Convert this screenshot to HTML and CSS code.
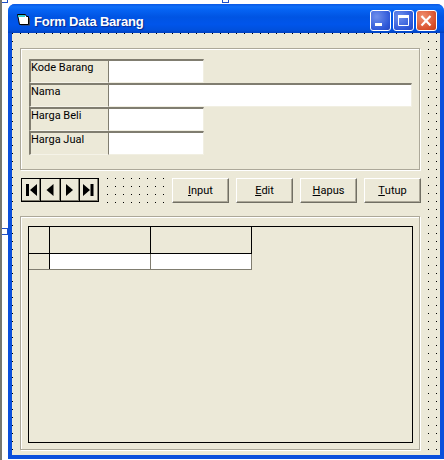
FILE: index.html
```html
<!DOCTYPE html>
<html lang="en">
<head>
    <meta charset="UTF-8">
    <title>Form Data Barang</title>
    <link rel="stylesheet" href="styles.css">
</head>
<body>
    <span class="handle handle-corner"></span>
    <span class="handle handle-top"></span>
    <span class="handle handle-left"></span>

    <div class="window">
        <div class="titlebar">
            <svg class="app-icon" width="16" height="16" viewBox="0 0 16 16">
                <path d="M1.500 2.500h8l1 2h2v8h-9z" fill="#fff" stroke="#000"/>
                <path d="M2 3h7v2H2z" fill="#3cc"/>
                <path d="M13 6h1v7.500H5v-.500h8z" fill="#445"/>
            </svg>
            <span class="title">Form Data Barang</span>
            <div class="caption-buttons">
                <div class="caption-btn">
                    <svg width="19" height="19" viewBox="0 0 19 19"><path d="M4 12h7v3H4z" fill="#fff"/></svg>
                </div>
                <div class="caption-btn">
                    <svg width="19" height="19" viewBox="0 0 19 19"><path d="M4.500 4.500h10v10h-10z" fill="none" stroke="#fff"/><path d="M4 4h11v3H4z" fill="#fff"/></svg>
                </div>
                <div class="caption-btn caption-close">
                    <svg width="19" height="19" viewBox="0 0 19 19"><path d="M4.500 5l9 9.500M13.500 5l-9 9.500" stroke="#fff" stroke-width="2.200"/></svg>
                </div>
            </div>
        </div>

        <div class="client">
            <div class="panel">
                <div class="group fields">
                    <div class="field">
                        <div class="field-label">Kode Barang</div>
                        <div class="field-input"></div>
                    </div>
                    <div class="field">
                        <div class="field-label">Nama</div>
                        <div class="field-input field-input-wide"></div>
                    </div>
                    <div class="field">
                        <div class="field-label">Harga Beli</div>
                        <div class="field-input"></div>
                    </div>
                    <div class="field">
                        <div class="field-label">Harga Jual</div>
                        <div class="field-input"></div>
                    </div>
                </div>

                <div class="toolbar">
                    <div class="nav">
                        <div class="nav-btn">
                            <svg width="14" height="14" viewBox="0 0 14 14"><path d="M2 1h3v12H2zM13 1v12L6 7z"/></svg>
                        </div>
                        <div class="nav-btn">
                            <svg width="14" height="14" viewBox="0 0 14 14"><path d="M10.500 1v12L3.500 7z"/></svg>
                        </div>
                        <div class="nav-btn">
                            <svg width="14" height="14" viewBox="0 0 14 14"><path d="M4 1v12l7-6z"/></svg>
                        </div>
                        <div class="nav-btn">
                            <svg width="14" height="14" viewBox="0 0 14 14"><path d="M2 1v12l7-6zM9.500 1h3v12h-3z"/></svg>
                        </div>
                    </div>
                    <div class="dots"></div>
                    <div class="buttons">
                        <div class="btn"><u>I</u>nput</div>
                        <div class="btn"><u>E</u>dit</div>
                        <div class="btn"><u>H</u>apus</div>
                        <div class="btn"><u>T</u>utup</div>
                    </div>
                </div>

                <div class="group grid-group">
                    <div class="grid">
                        <div class="grid-head">
                            <div class="cell cell-fixed"></div>
                            <div class="cell cell-col"></div>
                            <div class="cell cell-col"></div>
                        </div>
                        <div class="grid-row">
                            <div class="cell cell-fixed"></div>
                            <div class="cell cell-col cell-data"></div>
                            <div class="cell cell-col cell-data"></div>
                        </div>
                    </div>
                </div>
            </div>
        </div>
    </div>
</body>
</html>
```

FILE: styles.css
```css
* {
    margin: 0;
    padding: 0;
    box-sizing: border-box;
}

body {
    width: 444px;
    height: 460px;
    overflow: hidden;
    background: white;
    font-family: Roboto, 'Liberation Sans', sans-serif;
    font-size: 11px;
    color: #000;
    position: relative;
    padding: 4px 0 1px 6px;
    border-left: 2px solid #77776f;
}

/* designer sizing handles */
.handle {
    position: absolute;
    width: 7px;
    height: 7px;
    background: white;
    border: 1px solid #1f50c8;
}

.handle-corner {
    left: -1px;
    top: -4px;
}

.handle-top {
    left: 220px;
    top: -4px;
}

.handle-left {
    left: -1px;
    top: 228px;
}

.window {
    width: 436px;
    height: 455px;
    background: #0a4fdc;
    border-radius: 7px 7px 0 0;
    display: flex;
    flex-direction: column;
    overflow: hidden;
}

.titlebar {
    height: 29px;
    flex: none;
    display: flex;
    align-items: center;
    padding: 0 7px 0 8px;
    background: linear-gradient(#0a58e4 0, #1070f8 10%, #0562f2 22%, #0054e3 45%, #0055eb 70%, #0050dc 90%, #0040c0 100%);
}

.app-icon {
    flex: none;
    margin-top: 3px;
}

.title {
    margin-left: 2px;
    margin-top: 6px;
    color: white;
    font-family: 'Liberation Sans', Arial, sans-serif;
    font-size: 13px;
    font-weight: bold;
    letter-spacing: -0.2px;
    text-shadow: 1px 1px 1px #0a2a90;
}

.caption-buttons {
    margin-left: auto;
    margin-top: 4px;
    display: flex;
    gap: 2px;
}

.caption-btn {
    width: 21px;
    height: 21px;
    border: 1px solid white;
    border-radius: 3px;
    background: radial-gradient(circle at 30% 30%, #6f90ec, #2f58d8 70%, #2848c0);
}

.caption-btn svg {
    display: block;
}

.caption-close {
    background: radial-gradient(circle at 30% 30%, #f09070, #d8502c 70%, #c03c18);
}

.client {
    flex: 1;
    margin: 0 4px 5px 4px;
    background-color: #ece9d8;
    background-image: radial-gradient(circle at 0.500px 0.500px, #000 0.700px, transparent 0.800px);
    background-size: 8px 8px;
}

.panel {
    width: 409px;
    height: 421px;
    margin-top: 1px;
    margin-left: 1px;
    background: #ece9d8;
    padding: 14px 0 0 7px;
}

.group {
    width: 400px;
    border: 1px solid #aca899;
    box-shadow: inset 1px 1px 0 white, 1px 1px 0 white;
}

.fields {
    height: 122px;
    padding: 10px 0 0 8px;
}

.field {
    display: flex;
    height: 24px;
}

.field-label {
    width: 80px;
    height: 24px;
    border: 1px solid #807d70;
    border-top-width: 2px;
    border-left-width: 2px;
    border-bottom-color: #f5f3e8;
    line-height: 13px;
    font-size: 11px;
}

.field-input {
    width: 95px;
    height: 24px;
    background: white;
    border-top: 2px solid #807d70;
    border-right: 1px solid #f1efe2;
    border-bottom: 1px solid #f1efe2;
}

.field-input-wide {
    width: 303px;
}

.toolbar {
    height: 46px;
    padding-top: 8px;
    display: flex;
    align-items: flex-start;
    margin-left: 1px;
}

.nav {
    width: 78px;
    height: 24px;
    flex: none;
    display: flex;
    border: 1px solid #000;
    background: #000;
    gap: 1px;
}

.nav-btn {
    flex: 1;
    background: #ece9d8;
    border-right: 1px solid #807d70;
    border-bottom: 1px solid #807d70;
    display: flex;
    align-items: center;
    justify-content: center;
}

.dots {
    width: 60px;
    height: 26px;
    flex: none;
    margin-left: 8px;
    background-image: radial-gradient(circle at 0.500px 0.500px, #000 0.700px, transparent 0.800px);
    background-size: 8px 8px;
}

.buttons {
    margin-left: 5px;
    display: flex;
    gap: 7px;
}

.btn {
    width: 57px;
    height: 25px;
    background: #ece9d8;
    border: 1px solid;
    border-color: #fff #716f64 #716f64 #fff;
    box-shadow: inset -1px -1px 0 #aca899;
    display: flex;
    align-items: center;
    justify-content: center;
    font-size: 11px;
}

.grid-group {
    height: 234px;
    padding: 9px 0 0 7px;
}

.grid {
    width: 385px;
    height: 217px;
    border: 1px solid #000;
}

.grid-head,
.grid-row {
    display: flex;
    width: 223px;
}

.grid-head {
    height: 27px;
    border-bottom: 1px solid #000;
}

.grid-row {
    height: 16px;
    border-bottom: 1px solid #807d70;
}

.cell {
    height: 100%;
}

.cell-fixed {
    width: 21px;
    border-right: 1px solid #000;
}

.cell-col {
    width: 101px;
    border-right: 1px solid #000;
}

.cell-data {
    background: white;
    border-right-color: #807d70;
}
```
